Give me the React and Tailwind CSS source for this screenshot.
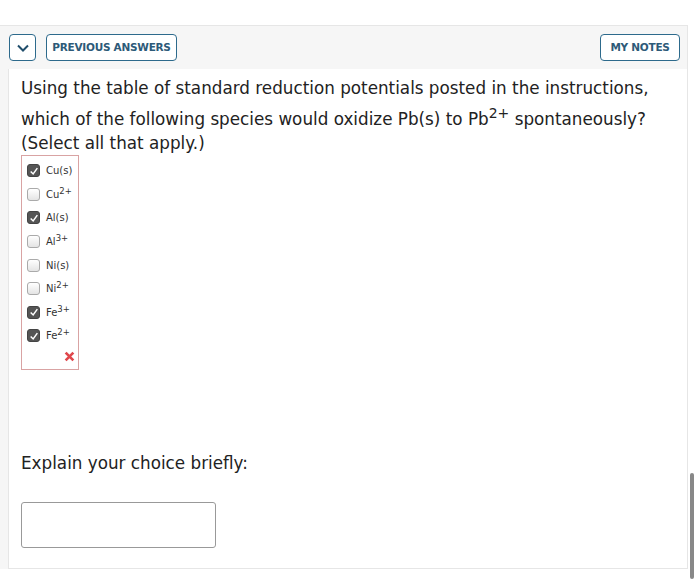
const options = [
  { base: "Cu(s)", checked: true },
  { base: "Cu", sup: "2+", checked: false },
  { base: "Al(s)", checked: true },
  { base: "Al", sup: "3+", checked: false },
  { base: "Ni(s)", checked: false },
  { base: "Ni", sup: "2+", checked: false },
  { base: "Fe", sup: "3+", checked: true },
  { base: "Fe", sup: "2+", checked: true },
];

const Box = ({ checked }) =>
  checked ? (
    <span className="flex h-[13px] w-[13px] items-center justify-center rounded-[3px] bg-[#555] border border-[#444]">
      <svg viewBox="0 0 12 12" className="h-[10px] w-[10px]">
        <path d="M2 6.5 L5 9.5 L10 2.5" fill="none" stroke="white" strokeWidth="1.8" />
      </svg>
    </span>
  ) : (
    <span className="h-[13px] w-[13px] rounded-[3px] border border-[#aaa] bg-gradient-to-b from-white to-[#e4e4e4]" />
  );

export default function App() {
  return (
    <div className="relative h-[579px] w-[700px] overflow-hidden bg-white font-['DejaVu_Sans',Verdana,sans-serif] text-[#222]">
      <div className="mt-[25px] w-[688px] border-t border-r border-[#e6e6e6] bg-[#f6f6f6]">
        <div className="flex h-[43px] items-center justify-between pl-[9px] pr-[7px]">
          <div className="flex items-center gap-[10px]">
            <button className="flex h-[27px] w-[27px] items-center justify-center rounded-[4px] border border-[#2d6a8c] bg-white">
              <svg viewBox="0 0 16 16" className="h-[16px] w-[16px]">
                <path d="M3 5.5 L8 10.5 L13 5.5" fill="none" stroke="#1f4d6b" strokeWidth="2" />
              </svg>
            </button>
            <button className="flex h-[27px] w-[131px] items-center justify-center rounded-[4px] border border-[#2d6a8c] bg-white text-[10.5px] font-bold tracking-tight text-[#2d5a78]">
              PREVIOUS ANSWERS
            </button>
          </div>
          <button className="flex h-[27px] w-[80px] items-center justify-center rounded-[4px] border border-[#2d6a8c] bg-white text-[10.5px] font-bold tracking-tight text-[#2d5a78]">
            MY NOTES
          </button>
        </div>
        <div className="ml-[8px] h-[500px] border-l border-b border-[#e6e6e6] bg-white pl-[12px] pt-[6px]">
          <div className="text-[16.8px]">
            <div className="leading-[26px]">
              Using the table of standard reduction potentials posted in the instructions,
            </div>
            <div className="pt-[5px] leading-[26px]">
              which of the following species would oxidize Pb(s) to Pb<sup className="text-[14px]">2+</sup> spontaneously?
            </div>
            <div className="leading-[22px]">(Select all that apply.)</div>
          </div>
          <div className="mt-[1px] flex w-[58px] flex-col border border-[#d9a3a3] pb-[7px] pl-[5px] pt-[3px]">
            {options.map((o, i) => (
              <div key={i} className="flex h-[23.6px] items-center gap-[6px]">
                <Box checked={o.checked} />
                <span className="text-[10px] text-[#333]">
                  {o.base}
                  {o.sup && <sup className="text-[8.5px]">{o.sup}</sup>}
                </span>
              </div>
            ))}
            <div className="mt-[3px] flex justify-end pr-[3px]">
              <svg viewBox="0 0 10 10" className="h-[11px] w-[11px]">
                <path d="M1.5 1.5 L8.5 8.5 M8.5 1.5 L1.5 8.5" stroke="#e0474c" strokeWidth="2.4" />
              </svg>
            </div>
          </div>
          <p className="mt-[81px] text-[16.8px]">Explain your choice briefly:</p>
          <div className="mt-[26px] h-[46px] w-[195px] rounded-[3px] border border-[#999] bg-white" />
        </div>
      </div>
      <div className="absolute right-[6px] top-[473px] h-[106px] w-[4px] rounded-[2px] bg-[#888]" />
    </div>
  );
}
